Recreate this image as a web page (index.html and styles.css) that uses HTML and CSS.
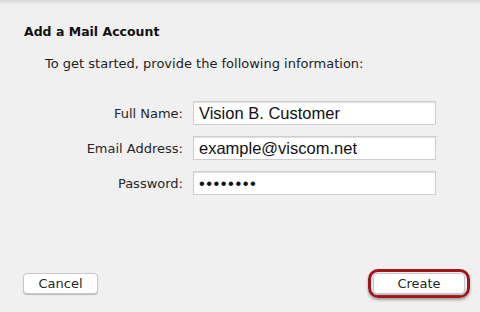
FILE: index.html
```html
<!DOCTYPE html>
<html lang="en">
<head>
    <meta charset="UTF-8">
    <title>Add a Mail Account</title>
    <link rel="stylesheet" href="styles.css">
</head>
<body>
    <div class="sheet">
        <h1 class="title">Add a Mail Account</h1>
        <p class="intro">To get started, provide the following information:</p>

        <!-- account fields -->
        <div class="fields">
            <div class="row">
                <label class="label">Full Name:</label>
                <input class="field" type="text" value="Vision B. Customer">
            </div>
            <div class="row">
                <label class="label">Email Address:</label>
                <input class="field" type="text" value="example@viscom.net">
            </div>
            <div class="row">
                <label class="label">Password:</label>
                <input class="field secret" type="password" value="password">
            </div>
        </div>

        <div class="buttons">
            <button class="btn">Cancel</button>
            <span class="highlight"><button class="btn">Create</button></span>
        </div>
    </div>
</body>
</html>
```

FILE: styles.css
```css
body {
    margin: 0;
    background-color: #f0f0f0;
    font-family: "DejaVu Sans", Verdana, sans-serif;
    color: #222;
}

.sheet {
    height: 312px;
    box-sizing: border-box;
    padding: 24px 0 0 0;
    display: flex;
    flex-direction: column;
    background: linear-gradient(#d8d8d8, #f0f0f0 5px);
}

.title {
    margin: 0 0 0 24px;
    font-size: 12.5px;
    font-weight: bold;
    color: #111;
}

.intro {
    margin: 17px 0 0 45px;
    font-size: 13px;
    color: #1e1e1e;
}

/* Form */
.fields {
    margin-top: 30px;
    display: flex;
    flex-direction: column;
    gap: 11px;
}
.row {
    display: flex;
    align-items: center;
}
.label {
    width: 193px;
    padding-right: 10px;
    box-sizing: border-box;
    text-align: right;
    font-size: 13px;
    color: #262626;
}
.field {
    width: 243px;
    height: 24px;
    box-sizing: border-box;
    margin: 0;
    padding: 0 5px;
    border: 1px solid #cdcdcd;
    box-shadow: inset 0 1px 1px #e0e0e0;
    background: #fff;
    font-family: "Liberation Sans", Arial, sans-serif;
    font-size: 16.5px;
    color: #111;
    outline: none;
}
.field.secret {
    letter-spacing: 1.5px;
}

/* Buttons */
.buttons {
    margin-top: auto;
    margin-bottom: 14px;
    display: flex;
    justify-content: space-between;
    align-items: center;
    padding: 0 10px 0 23px;
}
.btn {
    height: 21px;
    width: 75px;
    padding: 0;
    border: 1px solid #c8c8c8;
    border-radius: 4px;
    background: #fff;
    box-shadow: 0 1px 1px #bbb;
    font-family: "DejaVu Sans", Verdana, sans-serif;
    font-size: 13px;
    color: #262626;
}
.highlight {
    display: flex;
    padding: 1px 2px;
    border: 3px solid #a3151b;
    border-radius: 10px;
    box-shadow: 0 2px 3px rgba(0, 0, 0, 0.35);
}
.highlight .btn {
    width: 92px;
}
```
